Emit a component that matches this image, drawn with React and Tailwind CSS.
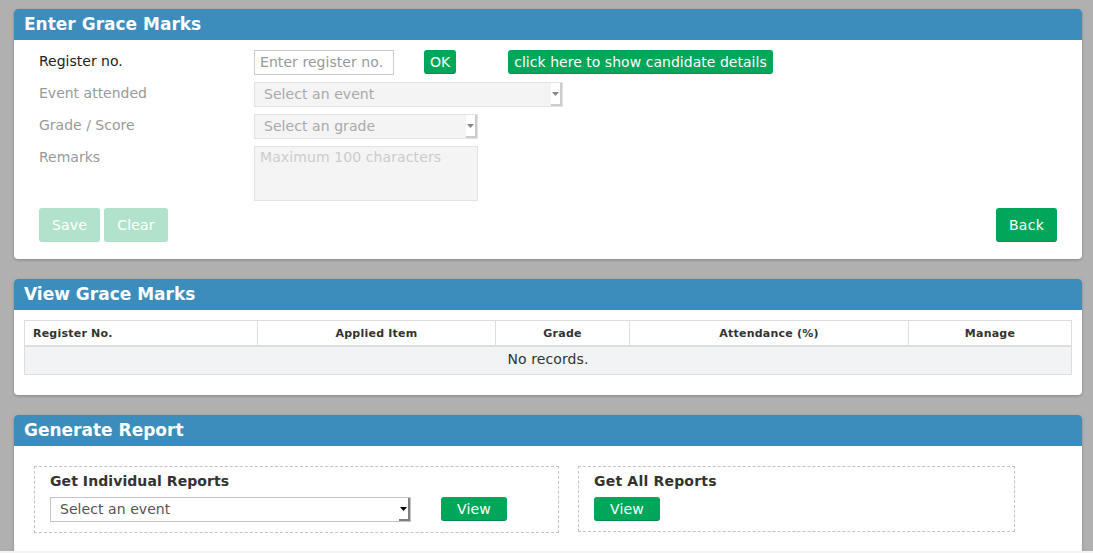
const tableHead = [
    { label: 'Register No.', width: 'w-[233px]', align: 'text-left' },
    { label: 'Applied Item', width: 'w-[238px]', align: 'text-center' },
    { label: 'Grade', width: 'w-[134px]', align: 'text-center' },
    { label: 'Attendance (%)', width: 'w-[279px]', align: 'text-center' },
    { label: 'Manage', width: '', align: 'text-center' },
];

const Panel = ({ title, className = '', children }) => (
    <section className={`ml-[14px] mr-[11px] bg-white rounded-[4px] shadow-[0_1px_3px_rgba(0,0,0,0.25)] ${className}`}>
        <h2 className="h-[31px] px-[10px] bg-[#3c8dbc] rounded-t-[4px] text-white text-[17px] leading-[30px] font-bold">
            {title}
        </h2>
        {children}
    </section>
);

const GreenButton = ({ className = '', disabled, children }) => (
    <button
        disabled={disabled}
        className={`shrink-0 rounded-[3px] border border-[#00a65a] bg-[#00a65a] border-b-[#008d4c] text-white text-[14px] ${disabled ? 'opacity-30' : ''} ${className}`}
    >
        {children}
    </button>
);

const SelectBox = ({ text, disabled, className = '' }) => (
    <div className={`flex h-[25px] border ${disabled ? 'border-[#e3e3e3] bg-[#f4f4f4]' : 'border-[#c4c4c4] bg-white'} ${className}`}>
        <select
            disabled={disabled}
            className={`flex-1 min-w-0 appearance-none bg-transparent text-[14px] tracking-[0.06px] pl-[9px] outline-none ${disabled ? 'text-[#aaaaaa]' : 'text-[#555555]'}`}
        >
            <option>{text}</option>
        </select>
        <span
            className={`flex items-center justify-center w-[11px] bg-white border-r-2 border-b-2 ${disabled ? 'border-[#cccccc]' : 'border-[#808080]'}`}
        >
            <svg width="7" height="4" viewBox="0 0 7 4">
                <path d="M0 0h7L3.5 4z" fill={disabled ? '#888888' : '#000000'} />
            </svg>
        </span>
    </div>
);

const App = () => {
    return (
        <div className="h-[553px] overflow-hidden bg-[#b0b0b0] pt-[9px] font-['DejaVu_Sans',sans-serif] text-[#333333]">
            <Panel title="Enter Grace Marks" className="h-[250px]">
                <div className="px-[25px] pt-[10px]">
                    <div className="flex h-[25px] text-[14px]">
                        <label className="w-[215px] leading-[23px] text-[#222222]">Register no.</label>
                        <input
                            placeholder="Enter register no."
                            className="w-[140px] h-[25px] border border-[#cccccc] px-[5px] pb-[2px] text-[14px] tracking-[0.06px] placeholder:text-[#999999] outline-none"
                        />
                        <GreenButton className="ml-[30px] w-[32px] h-[24px] leading-[20px]">OK</GreenButton>
                        <GreenButton className="ml-[52px] w-[265px] h-[24px] leading-[20px] tracking-[0.03px]">
                            click here to show candidate details
                        </GreenButton>
                    </div>
                    <div className="flex mt-[7px] text-[14px] text-[#999999]">
                        <label className="w-[215px] leading-[23px]">Event attended</label>
                        <SelectBox text="Select an event" disabled className="w-[309px]" />
                    </div>
                    <div className="flex mt-[7px] text-[14px] text-[#999999]">
                        <label className="w-[215px] leading-[23px]">Grade / Score</label>
                        <SelectBox text="Select an grade" disabled className="w-[224px]" />
                    </div>
                    <div className="flex mt-[7px] text-[14px] text-[#999999]">
                        <label className="w-[215px] leading-[23px]">Remarks</label>
                        <textarea
                            disabled
                            placeholder="Maximum 100 characters"
                            className="w-[224px] h-[55px] resize-none border border-[#e3e3e3] bg-[#f4f4f4] px-[5px] py-0 text-[14px] tracking-[0.1px] placeholder:text-[#cccccc]"
                        />
                    </div>
                    <div className="flex gap-[4px] mt-[7px]">
                        <GreenButton disabled className="w-[61px] h-[34px] tracking-[0.2px]">Save</GreenButton>
                        <GreenButton disabled className="w-[64px] h-[34px] tracking-[0.2px]">Clear</GreenButton>
                        <GreenButton className="ml-auto w-[61px] h-[34px] tracking-[0.3px]">Back</GreenButton>
                    </div>
                </div>
            </Panel>

            <Panel title="View Grace Marks" className="h-[116px] mt-[20px]">
                <div className="px-[10px] pt-[10px]">
                    <table className="w-full table-fixed border-collapse border border-[#dddddd] text-[#333333]">
                        <thead>
                            <tr className="h-[25px] border-b-2 border-[#dddddd]">
                                {tableHead.map((col) => (
                                    <th
                                        key={col.label}
                                        className={`${col.width} ${col.align} px-[8px] pt-[2px] border-r border-[#dddddd] last:border-r-0 text-[11px] font-bold tracking-[0.22px]`}
                                    >
                                        {col.label}
                                    </th>
                                ))}
                            </tr>
                        </thead>
                        <tbody>
                            <tr className="h-[29px] bg-[#f2f3f5]">
                                <td colSpan="5" className="pb-[2px] text-center text-[14px] tracking-[0.1px]">No records.</td>
                            </tr>
                        </tbody>
                    </table>
                </div>
            </Panel>

            <Panel title="Generate Report" className="h-[136px] mt-[20px] rounded-b-none">
                <div className="flex pl-[20px] pt-[20px]">
                    <div className="w-[525px] h-[67px] border border-dashed border-[#c4c4c4] pl-[15px] pt-[4px]">
                        <h3 className="text-[14px] leading-[20px] font-bold tracking-[0.08px]">Get Individual Reports</h3>
                        <div className="flex items-start mt-[6px]">
                            <SelectBox text="Select an event" className="w-[361px]" />
                            <GreenButton className="ml-[30px] w-[66px] h-[24px] tracking-[0.2px]">View</GreenButton>
                        </div>
                    </div>
                    <div className="ml-[19px] w-[437px] h-[66px] border border-dashed border-[#c4c4c4] pl-[15px] pt-[4px]">
                        <h3 className="text-[14px] leading-[20px] font-bold tracking-[0.2px]">Get All Reports</h3>
                        <GreenButton className="mt-[6px] w-[66px] h-[24px] tracking-[0.2px]">View</GreenButton>
                    </div>
                </div>
            </Panel>
            <div className="h-[2px] bg-[#f4f4f4]" />
        </div>
    );
};

export default App;
